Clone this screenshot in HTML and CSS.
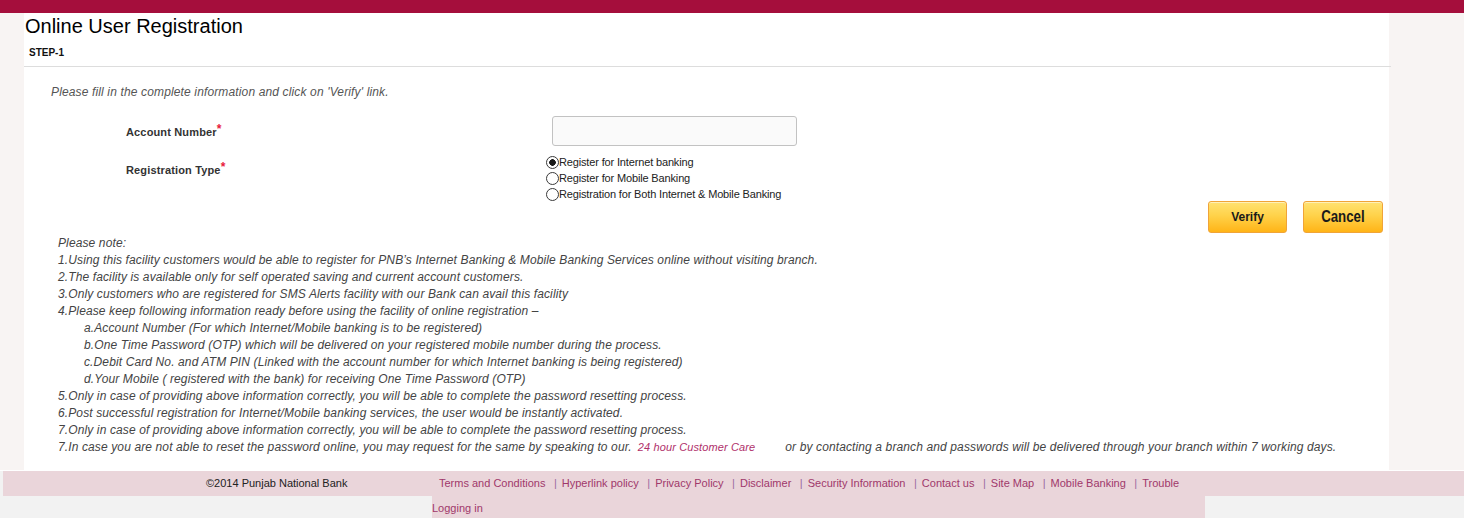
FILE: index.html
```html
<!DOCTYPE html>
<html lang="en">
<head>
    <meta charset="UTF-8">
    <meta name="viewport" content="width=device-width, initial-scale=1.0">
    <title>Online User Registration</title>
    <link rel="stylesheet" href="styles.css">
</head>
<body>
    <div class="topbar"></div>

    <div class="page">
        <div class="content">
            <h1 class="page-title">Online User Registration</h1>
            <div class="step">STEP-1</div>

            <p class="intro">Please fill in the complete information and click on 'Verify' link.</p>

            <form class="reg-form" onsubmit="return false;">
                <div class="form-row">
                    <label class="field-label" for="accountNo">Account Number<sup class="req">*</sup></label>
                    <input type="text" id="accountNo" class="text-input">
                </div>

                <div class="form-row radio-row">
                    <span class="field-label">Registration Type<sup class="req">*</sup></span>
                    <div class="radio-group">
                        <label class="radio-line"><input type="radio" name="regType" checked>Register for Internet banking</label>
                        <label class="radio-line"><input type="radio" name="regType">Register for Mobile Banking</label>
                        <label class="radio-line"><input type="radio" name="regType">Registration for Both Internet &amp; Mobile Banking</label>
                    </div>
                </div>

                <div class="button-row">
                    <button type="button" class="btn btn-verify">Verify</button>
                    <button type="button" class="btn btn-cancel"><span class="narrow">Cancel</span></button>
                </div>
            </form>

            <div class="notes">
                <div>Please note:</div>
                <div>1.Using this facility customers would be able to register for PNB’s Internet Banking &amp; Mobile Banking Services online without visiting branch.</div>
                <div>2.The facility is available only for self operated saving and current account customers.</div>
                <div>3.Only customers who are registered for SMS Alerts facility with our Bank can avail this facility</div>
                <div>4.Please keep following information ready before using the facility of online registration –</div>
                <div class="sub">a.Account Number (For which Internet/Mobile banking is to be registered)</div>
                <div class="sub">b.One Time Password (OTP) which will be delivered on your registered mobile number during the process.</div>
                <div class="sub">c.Debit Card No. and ATM PIN (Linked with the account number for which Internet banking is being registered)</div>
                <div class="sub">d.Your Mobile ( registered with the bank) for receiving One Time Password (OTP)</div>
                <div>5.Only in case of providing above information correctly, you will be able to complete the password resetting process.</div>
                <div>6.Post successful registration for Internet/Mobile banking services, the user would be instantly activated.</div>
                <div>7.Only in case of providing above information correctly, you will be able to complete the password resetting process.</div>
                <div>7.In case you are not able to reset the password online, you may request for the same by speaking to our.<a href="#" class="care-link">24 hour Customer Care</a>or by contacting a branch and passwords will be delivered through your branch within 7 working days.</div>
            </div>
        </div>
    </div>

    <div class="footer">
        <div class="copyright">©2014 Punjab National Bank</div>
        <div class="footer-links">
            <a href="#">Terms and Conditions</a><span class="sep">|</span><a href="#">Hyperlink policy</a><span class="sep">|</span><a href="#">Privacy Policy</a><span class="sep">|</span><a href="#">Disclaimer</a><span class="sep">|</span><a href="#">Security Information</a><span class="sep">|</span><a href="#">Contact us</a><span class="sep">|</span><a href="#">Site Map</a><span class="sep">|</span><a href="#">Mobile Banking</a><span class="sep">|</span><a href="#">Trouble</a>
            <br><a href="#" class="second-line">Logging in</a>
        </div>
    </div>
</body>
</html>
```

FILE: styles.css
```css
body {
    margin: 0;
    background: #f2f2f2;
    font-family: "Liberation Sans", Arial, sans-serif;
    color: #333;
}

.topbar {
    height: 13px;
    background: #a50e3c;
}

.page {
    display: flex;
    background: #f8f4f3;
    padding: 0 75px 0 24px;
    border-bottom: 1px solid #fff;
}

.content {
    flex: 1;
    height: 457px;
    background: #fff;
}

.page-title {
    margin: 0;
    padding-left: 1px;
    font-size: 20px;
    font-weight: normal;
    line-height: 26px;
    color: #000;
}

.step {
    padding-left: 5px;
    font-size: 10px;
    font-weight: bold;
    line-height: 27px;
    color: #111;
    border-bottom: 1px solid #ddd;
    margin-right: -2px;
}

.intro {
    margin: 17px 0 0 27px;
    font-size: 12px;
    font-style: italic;
    line-height: 17px;
    letter-spacing: 0.14px;
    color: #555;
}

/* Form */
.reg-form {
    margin-top: 15px;
}

.form-row {
    display: flex;
    align-items: center;
    padding-left: 102px;
}

.field-label {
    width: 426px;
    font-size: 11px;
    font-weight: bold;
    color: #333;
    line-height: 17px;
    padding-top: 2px;
    letter-spacing: 0.15px;
}

.req {
    color: #e8203c;
    font-size: 12px;
    line-height: 0;
    vertical-align: 3px;
}

.text-input {
    box-sizing: border-box;
    width: 245px;
    height: 30px;
    margin: 0;
    border: 1px solid #c2c2c2;
    border-radius: 3px;
    background: #fafafa;
}

.radio-row {
    align-items: flex-start;
    margin-top: 8px;
}

.radio-row .field-label {
    width: 420px;
    padding-top: 8px;
}

.radio-group {
    display: flex;
    flex-direction: column;
}

.radio-line {
    display: flex;
    align-items: center;
    height: 16px;
    font-size: 11px;
    letter-spacing: -0.15px;
    color: #222;
}

.radio-line input {
    appearance: none;
    -webkit-appearance: none;
    box-sizing: border-box;
    width: 13px;
    height: 13px;
    margin: 0;
    border: 1px solid #3a3a3a;
    border-radius: 50%;
    background: #fff;
}

.radio-line input:checked {
    background: radial-gradient(circle, #1a1a1a 0, #1a1a1a 3px, #fff 3.6px);
}

.button-row {
    display: flex;
    justify-content: flex-end;
    gap: 16px;
    margin-top: -1px;
    padding-right: 6px;
}

.btn {
    box-sizing: border-box;
    height: 32px;
    border: 1px solid #f0a438;
    border-radius: 3px;
    background: linear-gradient(to bottom, #ffe272 0%, #ffd24a 45%, #ffb417 100%);
    box-shadow: inset 0 1px 0 rgba(255, 255, 255, 0.5);
    color: #1a1a1a;
    font-weight: bold;
    cursor: pointer;
    padding: 0;
}

.btn-verify {
    width: 79px;
    font-size: 12px;
    font-family: "Liberation Sans", Arial, sans-serif;
}

.btn-cancel {
    width: 80px;
    font-size: 17px;
    font-family: "Liberation Sans", Arial, sans-serif;
}

.narrow {
    display: inline-block;
    transform: scaleX(0.78);
}

/* Notes */
.notes {
    margin: 2px 0 0 34px;
    font-size: 12px;
    font-style: italic;
    line-height: 17px;
    letter-spacing: 0.12px;
    color: #444;
}

.notes .sub {
    padding-left: 26px;
}

.care-link {
    margin: 0 30px 0 6px;
    font-size: 11px;
    color: #b0306a;
    text-decoration: none;
}

/* Footer */
.footer {
    display: flex;
    align-items: flex-start;
    margin-left: 3px;
    background: linear-gradient(#ead5da, #ead5da) top left / 100% 25px no-repeat;
    font-size: 11px;
    line-height: 25px;
}

.copyright {
    flex: none;
    width: 429px;
    box-sizing: border-box;
    padding-left: 203px;
    color: #222;
}

.footer-links {
    flex: none;
    width: 773px;
    background: #ead5da;
}

.footer-links a {
    color: #a0386a;
    text-decoration: none;
}

.footer-links > a:first-child {
    margin-left: 7px;
}

.sep {
    margin: 0 5px 0 8.5px;
    color: #9a6aa0;
}
```
